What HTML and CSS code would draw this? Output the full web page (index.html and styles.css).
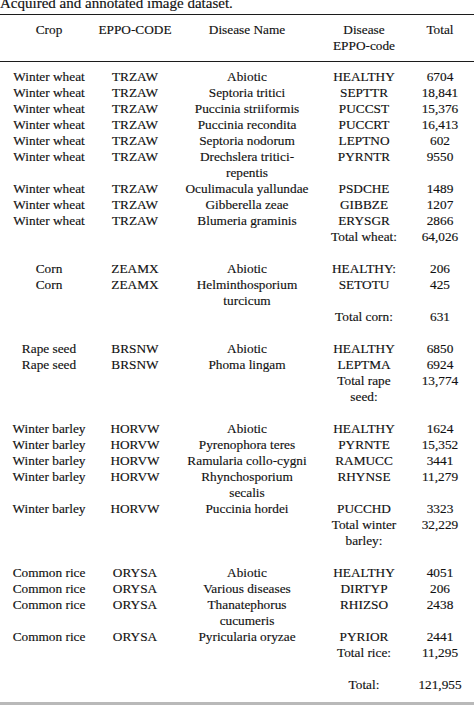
FILE: index.html
```html
<!DOCTYPE html>
<html lang="en">
<head>
<meta charset="utf-8">
<title>Acquired and annotated image dataset</title>
<link rel="stylesheet" href="styles.css">
</head>
<body>
<div class="page">
  <p class="caption">Acquired and annotated image dataset.</p>
  <table class="data">
    <colgroup>
      <col class="c-crop"><col class="c-code"><col class="c-name"><col class="c-dcode"><col class="c-total">
    </colgroup>
    <thead>
      <tr>
        <th>Crop</th><th>EPPO-CODE</th><th>Disease Name</th><th><span class="wrap">Disease EPPO-code</span></th><th>Total</th>
      </tr>
    </thead>
    <tbody>
      <tr class="first"><td>Winter wheat</td><td>TRZAW</td><td>Abiotic</td><td>HEALTHY</td><td>6704</td></tr>
      <tr><td>Winter wheat</td><td>TRZAW</td><td>Septoria tritici</td><td>SEPTTR</td><td>18,841</td></tr>
      <tr><td>Winter wheat</td><td>TRZAW</td><td>Puccinia striiformis</td><td>PUCCST</td><td>15,376</td></tr>
      <tr><td>Winter wheat</td><td>TRZAW</td><td>Puccinia recondita</td><td>PUCCRT</td><td>16,413</td></tr>
      <tr><td>Winter wheat</td><td>TRZAW</td><td>Septoria nodorum</td><td>LEPTNO</td><td>602</td></tr>
      <tr><td>Winter wheat</td><td>TRZAW</td><td>Drechslera tritici-repentis</td><td>PYRNTR</td><td>9550</td></tr>
      <tr><td>Winter wheat</td><td>TRZAW</td><td>Oculimacula yallundae</td><td>PSDCHE</td><td>1489</td></tr>
      <tr><td>Winter wheat</td><td>TRZAW</td><td>Gibberella zeae</td><td>GIBBZE</td><td>1207</td></tr>
      <tr><td>Winter wheat</td><td>TRZAW</td><td>Blumeria graminis</td><td>ERYSGR</td><td>2866</td></tr>
      <tr><td></td><td></td><td></td><td><span class="wrap">Total wheat:</span></td><td>64,026</td></tr>
      <tr class="gap"><td colspan="5"></td></tr>
      <tr><td>Corn</td><td>ZEAMX</td><td>Abiotic</td><td>HEALTHY:</td><td>206</td></tr>
      <tr><td>Corn</td><td>ZEAMX</td><td>Helminthosporium turcicum</td><td>SETOTU</td><td>425</td></tr>
      <tr><td></td><td></td><td></td><td><span class="wrap">Total corn:</span></td><td>631</td></tr>
      <tr class="gap"><td colspan="5"></td></tr>
      <tr><td>Rape seed</td><td>BRSNW</td><td>Abiotic</td><td>HEALTHY</td><td>6850</td></tr>
      <tr><td>Rape seed</td><td>BRSNW</td><td>Phoma lingam</td><td>LEPTMA</td><td>6924</td></tr>
      <tr><td></td><td></td><td></td><td><span class="wrap">Total rape seed:</span></td><td>13,774</td></tr>
      <tr class="gap"><td colspan="5"></td></tr>
      <tr><td>Winter barley</td><td>HORVW</td><td>Abiotic</td><td>HEALTHY</td><td>1624</td></tr>
      <tr><td>Winter barley</td><td>HORVW</td><td>Pyrenophora teres</td><td>PYRNTE</td><td>15,352</td></tr>
      <tr><td>Winter barley</td><td>HORVW</td><td>Ramularia collo-cygni</td><td>RAMUCC</td><td>3441</td></tr>
      <tr><td>Winter barley</td><td>HORVW</td><td>Rhynchosporium secalis</td><td>RHYNSE</td><td>11,279</td></tr>
      <tr><td>Winter barley</td><td>HORVW</td><td>Puccinia hordei</td><td>PUCCHD</td><td>3323</td></tr>
      <tr><td></td><td></td><td></td><td><span class="wrap">Total winter barley:</span></td><td>32,229</td></tr>
      <tr class="gap"><td colspan="5"></td></tr>
      <tr><td>Common rice</td><td>ORYSA</td><td>Abiotic</td><td>HEALTHY</td><td>4051</td></tr>
      <tr><td>Common rice</td><td>ORYSA</td><td>Various diseases</td><td>DIRTYP</td><td>206</td></tr>
      <tr><td>Common rice</td><td>ORYSA</td><td>Thanatephorus cucumeris</td><td>RHIZSO</td><td>2438</td></tr>
      <tr><td>Common rice</td><td>ORYSA</td><td>Pyricularia oryzae</td><td>PYRIOR</td><td>2441</td></tr>
      <tr><td></td><td></td><td></td><td><span class="wrap">Total rice:</span></td><td>11,295</td></tr>
      <tr class="gap"><td colspan="5"></td></tr>
      <tr class="last"><td></td><td></td><td></td><td><span class="wrap">Total:</span></td><td>121,955</td></tr>
    </tbody>
  </table>
</div>
</body>
</html>
```

FILE: styles.css
```css
html, body {
  margin: 0;
  padding: 0;
  background: #ffffff;
}

body {
  width: 474px;
  height: 706px;
  overflow: hidden;
  font-family: "Liberation Serif", "Times New Roman", serif;
  color: #111111;
  -webkit-text-stroke: 0.15px #111111;
}

.page {
  width: 474px;
}

.caption {
  margin: -5px 0 0 0;
  padding: 0;
  font-size: 15px;
  line-height: 16px;
  height: 19px;
  white-space: nowrap;
}

.data {
  width: 474px;
  table-layout: fixed;
  border-collapse: collapse;
  font-size: 13.3px;
  line-height: 16px;
}

.c-crop { width: 98px; }
.c-code { width: 74px; }
.c-name { width: 150px; }
.c-dcode { width: 84px; }
.c-total { width: 68px; }

.data th,
.data td {
  padding: 0;
  text-align: center;
  vertical-align: top;
  font-weight: normal;
}

.data td:nth-child(3) {
  padding: 0 11px;
}

.wrap {
  display: inline-block;
  max-width: 78px;
}

.data thead tr {
  border-top: 1px solid #1c1c1c;
  border-bottom: 1px solid #1c1c1c;
}

.data thead th {
  padding-top: 7px;
  padding-bottom: 7px;
}

.data tbody tr.first td {
  padding-top: 7px;
}

.data tbody tr.gap td {
  height: 16px;
}

.data tbody tr.last td {
  padding-bottom: 9px;
}

.data tbody tr.last {
  border-bottom: 3px solid #b9b9b9;
}
```
